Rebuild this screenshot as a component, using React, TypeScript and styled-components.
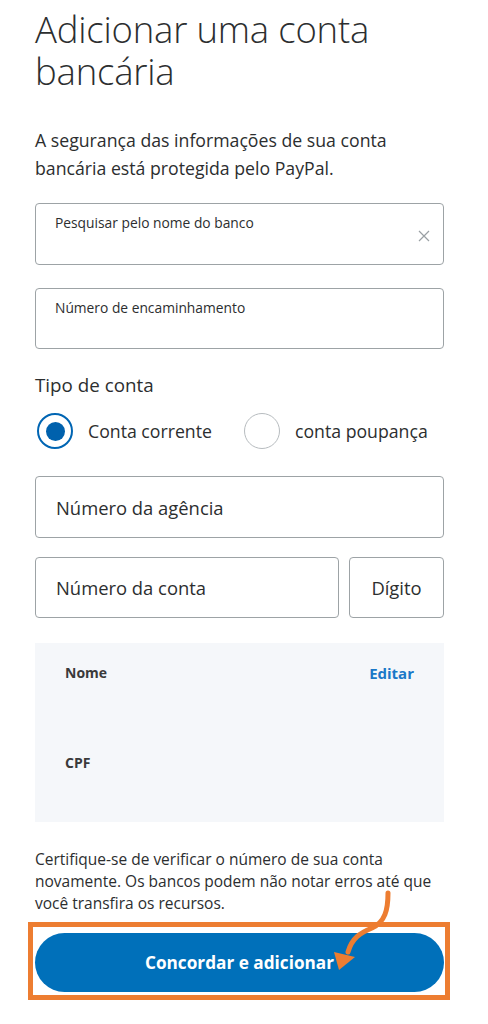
import React from "react";
import styled, { createGlobalStyle } from "styled-components";

const Global = createGlobalStyle`
  html, body { margin: 0; padding: 0; background: #fff; }
  body { font-family: "Open Sans", "Noto Sans", sans-serif; color: #2c2e2f; }
  * { box-sizing: border-box; }
`;

const Page = styled.div`
  width: 488px;
  padding: 8px 44px 0 35px;
  display: flex;
  flex-direction: column;
`;

const Title = styled.h1`
  margin: 0;
  font-family: "Open Sans", sans-serif;
  font-weight: 300;
  font-size: 36.5px;
  line-height: 42px;
  color: #2c2e2f;
  letter-spacing: -0.2px;
`;

const Intro = styled.p`
  margin: 34px 0 0;
  font-size: 17.7px;
  line-height: 28px;
  color: #2c2e2f;
`;

const Field = styled.div<{ $h?: number }>`
  position: relative;
  height: ${(p) => p.$h ?? 61}px;
  border: 1px solid #9da3a6;
  border-radius: 4px;
  background: #fff;
  display: flex;
  flex-direction: column;
  justify-content: center;
  padding: 0 20px;
`;

const FloatLabel = styled.div`
  position: absolute;
  top: 9px;
  left: 19px;
  font-size: 13.8px;
  line-height: 20px;
  color: #2c2e2f;
`;

const Placeholder = styled.div`
  font-size: 18.4px;
  color: #2c2e2f;
`;

const ClearIcon = styled.svg`
  position: absolute;
  right: 13px;
  top: 26px;
`;

const Stack = styled.div<{ $gap: number; $top: number }>`
  display: flex;
  flex-direction: column;
  gap: ${(p) => p.$gap}px;
  margin-top: ${(p) => p.$top}px;
`;

const SectionLabel = styled.div`
  margin-top: 24px;
  font-size: 18.8px;
  line-height: 24px;
  color: #2c2e2f;
`;

const RadioRow = styled.div`
  display: flex;
  align-items: center;
  margin-top: 16px;
  margin-left: 2px;
`;

const RadioOption = styled.label`
  display: flex;
  align-items: center;
  gap: 15px;
  font-size: 17.7px;
  white-space: nowrap;
  color: #2c2e2f;
  margin-right: 32px;
`;

const RadioCircle = styled.span<{ $checked?: boolean }>`
  flex: none;
  width: 36px;
  height: 36px;
  border-radius: 50%;
  border: ${(p) => (p.$checked ? "2px solid #0065b3" : "1px solid #b7bcbf")};
  display: flex;
  align-items: center;
  justify-content: center;
  &::after {
    content: "";
    display: ${(p) => (p.$checked ? "block" : "none")};
    width: 19px;
    height: 19px;
    border-radius: 50%;
    background: #0061ad;
  }
`;

const Row = styled.div`
  display: flex;
  gap: 10px;
`;

const Grow = styled.div`
  flex: 1;
`;

const DigitBox = styled(Field)`
  width: 95px;
  align-items: center;
  padding: 0;
`;

const Panel = styled.div`
  margin-top: 25px;
  background: #f5f7fa;
  height: 179px;
  padding: 20px 30px 0 30px;
`;

const PanelRow = styled.div<{ $h: number }>`
  display: flex;
  justify-content: space-between;
  align-items: flex-start;
  height: ${(p) => p.$h}px;
`;

const PanelLabel = styled.span`
  font-size: 14px;
  font-weight: 700;
  color: #3a3a3a;
`;

const EditLink = styled.a`
  font-size: 15px;
  font-weight: 700;
  color: #1a78c8;
  text-decoration: none;
`;

const Notice = styled.p`
  margin: 26px -6px 0 0;
  font-size: 15.5px;
  line-height: 22px;
  color: #2c2e2f;
`;

const Highlight = styled.div`
  position: relative;
  margin: 8px -6px 0 -7px;
  border: 5px solid #ed7d31;
  padding: 6px 1px 3px 2px;
`;

const PrimaryButton = styled.button`
  display: block;
  width: 100%;
  height: 59px;
  border: none;
  border-radius: 30px;
  background: #0070ba;
  color: #fff;
  font-family: "Open Sans", "Noto Sans", sans-serif;
  font-size: 17.2px;
  font-weight: 700;
`;

const Arrow = styled.svg`
  position: absolute;
  left: 290px;
  top: -40px;
  overflow: visible;
`;

export default function App() {
  return (
    <>
      <Global />
      <Page>
        <Title>Adicionar uma conta bancária</Title>
        <Intro>
          A segurança das informações de sua conta bancária está protegida pelo PayPal.
        </Intro>
        <Stack $gap={23} $top={21}>
          <Field $h={62}>
            <FloatLabel>Pesquisar pelo nome do banco</FloatLabel>
            <ClearIcon width="12" height="12" viewBox="0 0 12 12">
              <path d="M1 1 L11 11 M11 1 L1 11" stroke="#9aa0a4" strokeWidth="1.2" fill="none" />
            </ClearIcon>
          </Field>
          <Field $h={61}>
            <FloatLabel>Número de encaminhamento</FloatLabel>
          </Field>
        </Stack>
        <SectionLabel>Tipo de conta</SectionLabel>
        <RadioRow>
          <RadioOption>
            <RadioCircle $checked />
            Conta corrente
          </RadioOption>
          <RadioOption>
            <RadioCircle />
            conta poupança
          </RadioOption>
        </RadioRow>
        <Stack $gap={19} $top={27}>
          <Field $h={62}>
            <Placeholder>Número da agência</Placeholder>
          </Field>
          <Row>
            <Grow>
              <Field $h={61}>
                <Placeholder>Número da conta</Placeholder>
              </Field>
            </Grow>
            <DigitBox $h={61}>
              <Placeholder>Dígito</Placeholder>
            </DigitBox>
          </Row>
        </Stack>
        <Panel>
          <PanelRow $h={90}>
            <PanelLabel>Nome</PanelLabel>
            <EditLink href="#">Editar</EditLink>
          </PanelRow>
          <PanelRow $h={40}>
            <PanelLabel>CPF</PanelLabel>
          </PanelRow>
        </Panel>
        <Notice>
          Certifique-se de verificar o número de sua conta novamente. Os bancos podem não notar erros até que você transfira os recursos.
        </Notice>
        <Highlight>
          <PrimaryButton>Concordar e adicionar</PrimaryButton>
          <Arrow width="80" height="90" viewBox="290 -40 80 90">
            <path
              d="M355 -34 C355 -17 352 -5 339 1 C327 6 319 11 315 25"
              stroke="#ed7d31"
              strokeWidth="5"
              fill="none"
              strokeLinecap="round"
            />
            <path d="M301 25 L322 30 L306 43 Z" fill="#ed7d31" />
          </Arrow>
        </Highlight>
      </Page>
    </>
  );
}
